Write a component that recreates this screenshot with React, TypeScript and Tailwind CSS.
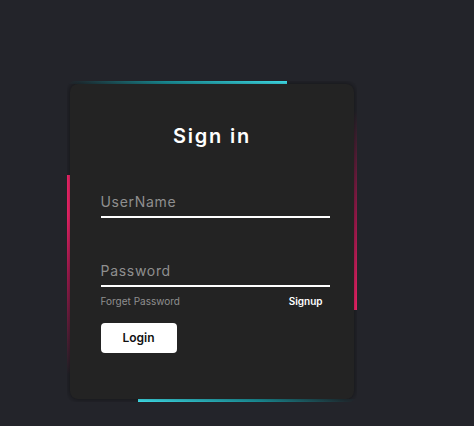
import React from "react";

const font = { fontFamily: "Inter, 'Noto Sans', sans-serif" };

const inputCls =
  "block h-[30px] w-full bg-transparent text-[14px] tracking-[0.05em] text-white outline-none placeholder:text-[#8f8f8f]";

export default function App() {
  return (
    <div className="min-h-[426px] w-full bg-[#23242a] pl-[67px] pt-[81px]" style={font}>
      <div className="relative h-[321px] w-[290px] overflow-hidden rounded-[8px] p-[3px]">
        <span className="absolute left-0 top-0 h-[3px] w-[220px] bg-[linear-gradient(90deg,transparent,#1c9aa3_45%,#45f3ff)]" />
        <span className="absolute right-0 top-[29px] h-[200px] w-[3px] bg-[linear-gradient(180deg,transparent,#a81c52_55%,#ff2770)]" />
        <span className="absolute bottom-0 left-[71px] h-[3px] w-[219px] bg-[linear-gradient(90deg,#45f3ff,#1c9aa3_55%,transparent)]" />
        <span className="absolute left-0 top-[94px] h-[200px] w-[3px] bg-[linear-gradient(180deg,#ff2770,#ff2770_20%,#a81c52_50%,transparent)]" />

        <form
          className="relative z-10 flex h-full flex-col items-center rounded-[8px] bg-[#232323] pt-[38px] shadow-[0_0_6px_rgba(0,0,0,0.5)]"
          onSubmit={(e) => e.preventDefault()}
        >
          <h2 className="text-[20px] font-semibold leading-[28px] tracking-[0.09em] text-white">
            Sign in
          </h2>

          <div className="mt-[36px] flex w-[229px] translate-x-[3px] flex-col">
            <label className="block border-b-2 border-white">
              <input type="text" placeholder="UserName" className={inputCls} />
            </label>

            <label className="mt-[37px] block border-b-2 border-white">
              <input type="password" placeholder="Password" className={inputCls} />
            </label>

            <div className="mt-[7px] flex items-center justify-between pr-[7px] text-[10px] leading-[15px]">
              <a href="#" className="text-[#8f8f8f]">
                Forget Password
              </a>
              <a href="#" className="font-semibold text-white">
                Signup
              </a>
            </div>

            <button
              type="submit"
              className="mt-[14px] h-[30px] w-[76px] rounded-[4px] bg-white text-[12px] font-semibold text-[#111]"
            >
              Login
            </button>
          </div>
        </form>
      </div>
    </div>
  );
}
